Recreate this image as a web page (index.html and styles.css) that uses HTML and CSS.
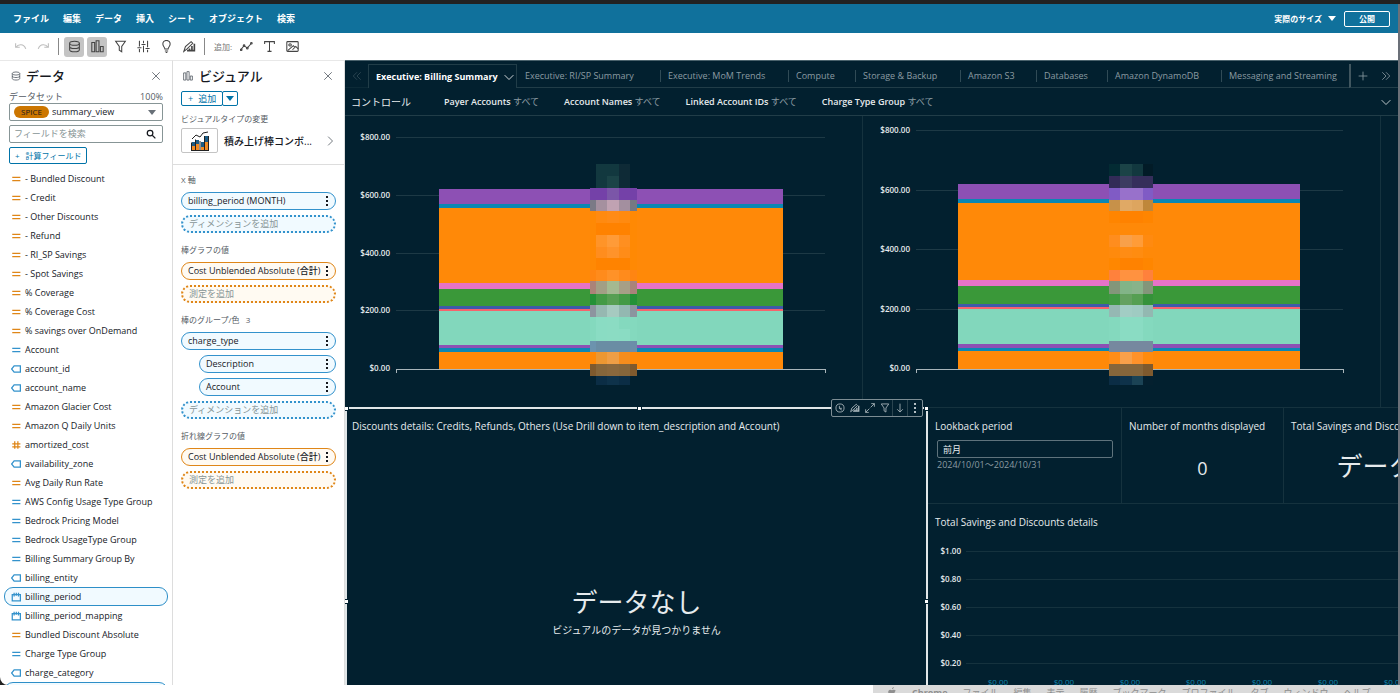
FILE: index.html
```
<!DOCTYPE html>
<html lang="ja">
<head>
    <meta charset="UTF-8">
    <meta name="viewport" content="width=device-width, initial-scale=1.0">
    <title>Billing Summary</title>
    <link rel="stylesheet" href="styles.css">
</head>
<body>
    <div class="shell">
        <div class="app">
            <header class="menubar">
                <nav class="menu">
                    <a href="#">ファイル</a>
                    <a href="#">編集</a>
                    <a href="#">データ</a>
                    <a href="#">挿入</a>
                    <a href="#">シート</a>
                    <a href="#">オブジェクト</a>
                    <a href="#">検索</a>
                </nav>
                <button class="zoom-button">実際のサイズ <span class="caret"></span></button>
                <button class="publish-button">公開</button>
            </header>

            <div class="toolbar">
                <button class="tool faded" aria-label="Undo"><svg class="icon" viewBox="0 0 16 16"><path d="M2 4v5h5M2.500 9C5 5 12 4 14.500 11"/></svg></button>
                <button class="tool faded" aria-label="Redo"><svg class="icon" viewBox="0 0 16 16"><path d="M14 4v5H9M13.500 9C11 5 4 4 1.500 11"/></svg></button>
                <span class="divider"></span>
                <button class="tool on" aria-label="Data"><svg class="icon" viewBox="0 0 16 16"><ellipse cx="8" cy="4" rx="6" ry="2.500"/><path d="M2 4v8c0 3.300 12 3.300 12 0V4M2 8c0 3.300 12 3.300 12 0"/></svg></button>
                <button class="tool on" aria-label="Visuals"><svg class="icon" viewBox="0 0 16 16"><path d="M1 3h3.500v11.500H1zM6.300 1h3.500v13.500H6.300zM11.600 8H15v6.500h-3.400z"/></svg></button>
                <button class="tool" aria-label="Filter"><svg class="icon" viewBox="0 0 16 16"><path d="M2 1.500h12L9.500 8v6.500l-3-2V8z"/></svg></button>
                <button class="tool" aria-label="Parameters"><svg class="icon" viewBox="0 0 16 16"><path d="M3 1v7M3 11v4M8 1v3M8 7v8M13 1v8M13 12v3M.5 9.500h5M5.500 5.500h5M10.500 10.500h5"/></svg></button>
                <button class="tool" aria-label="Insights"><svg class="icon" viewBox="0 0 16 16"><path d="M6 11C6 9 3.500 8 3.500 5a4.500 4.500 0 0 1 9 0c0 3-2.500 4-2.500 6zM6 13.500h4M7 15.500h2"/></svg></button>
                <button class="tool" aria-label="Edit visual"><svg class="icon" viewBox="0 0 16 16"><path d="M1 14l2-6 7-6 2 2-7 7z"/><path d="M8 10.500V14M11 7.500V14M14 4.500V14M5 13h10" stroke-width="2"/></svg></button>
                <span class="divider"></span>
                <span class="tool-label">追加:</span>
                <button class="tool" aria-label="Add line"><svg class="icon" viewBox="0 0 16 16"><path d="M1 12l4-5 4 3 5-6"/><circle cx="1.500" cy="12" r="1"/><circle cx="5" cy="7" r="1"/><circle cx="9" cy="10" r="1"/><circle cx="14" cy="4" r="1"/></svg></button>
                <button class="tool" aria-label="Add text"><svg class="icon" viewBox="0 0 16 16"><path d="M2 5V2h12v3M8 2v12M5.500 14h5"/></svg></button>
                <button class="tool" aria-label="Add image"><svg class="icon" viewBox="0 0 16 16"><rect x="1" y="2" width="14" height="12" rx="1"/><path d="M2 13l7-6 2 2M8 12l4-4 3 3"/><circle cx="5" cy="6" r="1.500"/></svg></button>
            </div>

            <div class="workspace">
                <aside class="panel data-panel">
                    <div class="panel-head">
                        <svg class="icon small" viewBox="0 0 16 16"><ellipse cx="8" cy="4" rx="6" ry="2.500"/><path d="M2 4v8c0 3.300 12 3.300 12 0V4M2 8c0 3.300 12 3.300 12 0"/></svg>
                        <h2>データ</h2>
                        <button class="close" aria-label="Close"><svg class="icon small" viewBox="0 0 16 16"><path d="M2 2l12 12M14 2L2 14"/></svg></button>
                    </div>
                    <div class="dataset-label"><label for="dataset">データセット</label><span>100%</span></div>
                    <div class="box">
                        <span class="badge">SPICE</span>
                        <select id="dataset"><option>summary_view</option></select>
                        <span class="caret"></span>
                    </div>
                    <div class="box search">
                        <input type="text" placeholder="フィールドを検索" aria-label="フィールドを検索">
                        <svg class="icon small dark" viewBox="0 0 16 16"><circle cx="6.500" cy="6.500" r="4.500"/><path d="M10 10l5 5"/></svg>
                    </div>
                    <button class="outline-button calc"><span>+</span>計算フィールド</button>
                    <ul class="fields" id="fields"></ul>
                </aside>

                <aside class="panel visual-panel">
                    <div class="panel-head">
                        <svg class="icon small" viewBox="0 0 16 16"><path d="M1 3h3.500v11.500H1zM6.300 1h3.500v13.500H6.300zM11.600 8H15v6.500h-3.400z"/></svg>
                        <h2>ビジュアル</h2>
                        <button class="close" aria-label="Close"><svg class="icon small" viewBox="0 0 16 16"><path d="M2 2l12 12M14 2L2 14"/></svg></button>
                    </div>
                    <div class="split">
                        <button class="outline-button"><span>+</span>追加</button>
                        <button class="outline-button" aria-label="More"><span class="caret"></span></button>
                    </div>
                    <p class="type-label">ビジュアルタイプの変更</p>
                    <button class="type-row">
                        <span class="thumb">
                            <svg viewBox="0 0 20 20" width="20" height="20">
                                <path d="M1 19.500h18" stroke="#222" fill="none"/>
                                <path fill="#f08a24" d="M2 15h3v4H2zM6 13h3v6H6zM11 16h3v3h-3zM15 11h3v8h-3z"/>
                                <path fill="#1c5c85" d="M2 11h3v4H2zM6 9h3v4H6zM11 11h3v5h-3zM15 5h3v6h-3z"/>
                                <path d="M1.500 11.500v7.500M5.500 8.500V19M10 10v9M14.500 5v14M18.500 5v14M2 8l4-4 4 2 3-4 5-1" stroke="#222" fill="none"/>
                            </svg>
                        </span>
                        <span class="type-name">積み上げ棒コンボ...</span>
                        <svg class="icon small" viewBox="0 0 16 16"><path d="M5 1l7 7-7 7"/></svg>
                    </button>
                    <div class="wells">
                        <section class="well">
                            <h3>X 軸</h3>
                            <button class="pill">billing_period (MONTH)<i class="dots"></i></button>
                            <button class="pill empty">ディメンションを追加</button>
                        </section>
                        <section class="well measure">
                            <h3>棒グラフの値</h3>
                            <button class="pill">Cost Unblended Absolute (合計)<i class="dots"></i></button>
                            <button class="pill empty">測定を追加</button>
                        </section>
                        <section class="well">
                            <h3>棒のグループ/色 &nbsp; 3</h3>
                            <button class="pill">charge_type<i class="dots"></i></button>
                            <button class="pill nested">Description<i class="dots"></i></button>
                            <button class="pill nested">Account<i class="dots"></i></button>
                            <button class="pill empty">ディメンションを追加</button>
                        </section>
                        <section class="well measure">
                            <h3>折れ線グラフの値</h3>
                            <button class="pill">Cost Unblended Absolute (合計)<i class="dots"></i></button>
                            <button class="pill empty">測定を追加</button>
                        </section>
                    </div>
                </aside>

                <main class="canvas">
                    <nav class="tabs">
                        <button class="tab-nav faded" aria-label="Previous sheets"><svg class="icon small" viewBox="0 0 16 16"><path d="M8 2L2 8l6 6M14 2L8 8l6 6"/></svg></button>
                        <button class="tab active">Executive: Billing Summary <svg class="icon small" viewBox="0 0 16 16"><path d="M1 5l7 7 7-7"/></svg></button>
                        <button class="tab">Executive: RI/SP Summary</button>
                        <button class="tab">Executive: MoM Trends</button>
                        <button class="tab">Compute</button>
                        <button class="tab">Storage &amp; Backup</button>
                        <button class="tab">Amazon S3</button>
                        <button class="tab">Databases</button>
                        <button class="tab">Amazon DynamoDB</button>
                        <button class="tab">Messaging and Streaming</button>
                        <button class="tab-nav add" aria-label="Add sheet"><svg class="icon small" viewBox="0 0 16 16"><path d="M8 1v14M1 8h14"/></svg></button>
                        <button class="tab-nav" aria-label="Next sheets"><svg class="icon small" viewBox="0 0 16 16"><path d="M2 2l6 6-6 6M8 2l6 6-6 6"/></svg></button>
                    </nav>
                    <div class="controls">
                        <span class="controls-title">コントロール</span>
                        <span class="control"><b>Payer Accounts</b> すべて</span>
                        <span class="control"><b>Account Names</b> すべて</span>
                        <span class="control"><b>Linked Account IDs</b> すべて</span>
                        <span class="control"><b>Charge Type Group</b> すべて</span>
                        <button class="expand" aria-label="Expand"><svg class="icon small" viewBox="0 0 16 16"><path d="M1 5l7 7 7-7"/></svg></button>
                    </div>

                    <div class="charts">
                        <div class="chart-cell"><svg class="chart" id="chartLeft" viewBox="0 0 517 291"></svg></div>
                        <div class="chart-cell"><svg class="chart" id="chartRight" viewBox="0 0 517 291"></svg></div>
                        <div></div>
                    </div>

                    <div class="lower">
                        <section class="visual active-visual">
                            <h4>Discounts details: Credits, Refunds, Others (Use Drill down to item_description and Account)</h4>
                            <div class="no-data">
                                <p class="no-data-title">データなし</p>
                                <p>ビジュアルのデータが見つかりません</p>
                            </div>
                            <i class="handle top-left"></i><i class="handle top"></i><i class="handle top-right"></i>
                            <i class="handle left"></i><i class="handle right"></i>
                            <div class="visual-tools">
                                <button aria-label="Anomaly"><svg class="icon small" viewBox="0 0 16 16"><circle cx="8" cy="8" r="6.500"/><path d="M7 4.500v4h4M7 8.500l4 3"/></svg></button>
                                <button aria-label="Format"><svg class="icon small" viewBox="0 0 16 16"><path d="M1 14l2-6 7-6 2 2-7 7z"/><path d="M8 10.500V14M11 7.500V14M14 4.500V14M5 13h10" stroke-width="2"/></svg></button>
                                <button aria-label="Maximize"><svg class="icon small" viewBox="0 0 16 16"><path d="M9 7l6-6M10 1h5v5M7 9l-6 6M1 10v5h5"/></svg></button>
                                <button aria-label="Filter"><svg class="icon small" viewBox="0 0 16 16"><path d="M2 1.500h12L9.500 8v6.500l-3-2V8z"/></svg></button>
                                <button class="ruled" aria-label="Drill down"><svg class="icon small" viewBox="0 0 16 16"><path d="M8 1v13M3.500 10L8 14.500l4.500-4.500"/></svg></button>
                                <button class="ruled" aria-label="Menu"><i class="dots"></i></button>
                            </div>
                        </section>
                        <div class="side">
                            <div class="kpis">
                                <section class="visual lookback">
                                    <label for="lookback">Lookback period</label>
                                    <input id="lookback" type="text" value="前月">
                                    <small>2024/10/01〜2024/10/31</small>
                                </section>
                                <section class="visual kpi">
                                    <h4>Number of months displayed</h4>
                                    <p class="number">0</p>
                                </section>
                                <section class="visual kpi">
                                    <h4>Total Savings and Discounts</h4>
                                    <p class="kpi-empty">データなし</p>
                                </section>
                            </div>
                            <section class="visual details">
                                <h4>Total Savings and Discounts details</h4>
                                <svg class="details-chart" id="chartDetails" width="540" height="160"></svg>
                            </section>
                        </div>
                    </div>
                </main>
            </div>
        </div>
    </div>

    <footer class="os-strip">
        <div class="os-menu">
            <svg viewBox="0 0 16 16" width="10" height="10"><path fill="#8f8f8f" d="M11 0c0 2-1.500 3.500-3 3.500C8 1.500 9.500.5 11 0zM8 5c1-.5 4-1.500 6 1-3 2-2 5 .5 6-2 4-3.500 4-6 3-2.500 1-4 0-5.500-3C1 8 2 5 5 4.500 6 4.500 7 5 8 5z"/></svg>
            <b>Chrome</b><span>ファイル</span><span>編集</span><span>表示</span><span>履歴</span><span>ブックマーク</span><span>プロファイル</span><span>タブ</span><span>ウィンドウ</span><span>ヘルプ</span>
        </div>
    </footer>

    <script src="script.js"></script>
</body>
</html>
```
FILE: styles.css
```
/* Basic reset and global styles */
* {
    margin: 0;
    padding: 0;
    box-sizing: border-box;
}
body {
    font-family: 'Open Sans', 'Noto Sans CJK JP', sans-serif;
    font-size: 9px;
    line-height: 12px;
    color: #16191f;
    background-color: #ffffff;
    display: flex;
    flex-direction: column;
    height: 100vh;
    overflow: hidden;
}
button, input, select {
    font: inherit;
    color: inherit;
    background: none;
    border: none;
    outline: none;
}
button {
    cursor: pointer;
}
a {
    color: inherit;
    text-decoration: none;
}
.shell {
    flex: 1;
    min-height: 0;
    padding-top: 4px;
    background-color: #222222;
}
.app {
    height: 100%;
    display: flex;
    flex-direction: column;
    background-color: #ffffff;
    border-right: 2px solid #6b7078;
    border-bottom-left-radius: 8px;
    overflow: hidden;
}
.icon {
    width: 13px;
    height: 13px;
    fill: none;
    stroke: currentColor;
    stroke-width: 1.3;
    flex-shrink: 0;
}
.icon.small {
    width: 10px;
    height: 10px;
}
.icon.dark {
    color: #16191f;
    stroke-width: 2;
}
.caret {
    display: inline-block;
    border: 4px solid transparent;
    border-top: 5px solid currentColor;
    border-bottom: none;
}
.dots {
    width: 2px;
    height: 2px;
    background-color: currentColor;
    box-shadow: 0 -4px currentColor, 0 4px currentColor;
}

/* Menu bar */
.menubar {
    height: 29px;
    flex-shrink: 0;
    display: flex;
    align-items: center;
    padding: 0 8px 0 13px;
    background-color: #10719c;
    color: #ffffff;
    font-weight: 700;
}
.menu {
    display: flex;
    gap: 14px;
    margin-right: auto;
}
.zoom-button {
    display: flex;
    align-items: center;
    gap: 6px;
    margin-right: 8px;
    font-size: 8px;
    font-weight: 700;
}
.publish-button {
    width: 46px;
    height: 16px;
    border: 1px solid #ffffff;
    border-radius: 2px;
    font-size: 8px;
    font-weight: 700;
    line-height: 12px;
}

/* Toolbar */
.toolbar {
    height: 27px;
    flex-shrink: 0;
    display: flex;
    align-items: center;
    gap: 3px;
    padding: 0 10px;
    color: #444444;
}
.tool {
    width: 20px;
    height: 20px;
    display: flex;
    align-items: center;
    justify-content: center;
    border-radius: 3px;
}
.tool.on {
    background-color: #c4c4c4;
}
.faded {
    opacity: 0.35;
}
.divider {
    width: 1px;
    height: 17px;
    margin: 0 2px;
    background-color: #888888;
}
.tool-label {
    padding: 0 1px 0 4px;
    color: #777777;
    font-size: 8px;
}

/* Side panels */
.workspace {
    flex: 1;
    min-height: 0;
    display: flex;
}
.panel {
    width: 173px;
    flex-shrink: 0;
    border-top: 1px solid #e8e8e8;
    border-right: 1px solid #dddddd;
    color: #545b64;
    overflow: hidden;
}
.data-panel {
    padding: 0 4px;
}
.panel-head {
    display: flex;
    align-items: center;
    gap: 5px;
    height: 30px;
    padding: 0 7px;
}
.panel-head h2 {
    font-size: 13px;
    font-weight: 500;
    line-height: 18px;
    color: #16191f;
    margin-right: auto;
}
.close {
    display: flex;
}
.dataset-label {
    display: flex;
    justify-content: space-between;
    padding: 0 5px;
}
.box {
    display: flex;
    align-items: center;
    gap: 3px;
    height: 18px;
    margin: 0 5px 4px;
    padding: 0 6px 0 4px;
    border: 1px solid #879596;
    border-radius: 2px;
}
.box .caret {
    color: #687078;
}
.box select,
.box input {
    flex: 1;
    min-width: 0;
}
.box select {
    appearance: none;
    font-weight: 500;
    color: #16191f;
}
.box input::placeholder {
    color: #879596;
}
.badge {
    padding: 0 7px;
    border-radius: 6px;
    background-color: #cc7600;
    color: #16191f;
    font-size: 8px;
    font-weight: 500;
}
.outline-button {
    display: flex;
    align-items: center;
    gap: 5px;
    height: 16px;
    padding: 0 6px;
    border: 1px solid #0073a8;
    border-radius: 2px;
    color: #0073a8;
    line-height: 12px;
}
.calc {
    gap: 6px;
    height: 17px;
    margin: 0 5px 5px;
    padding: 0 5px;
    font-size: 8px;
}
.fields {
    list-style: none;
    color: #16191f;
    font-weight: 500;
}
.fields li {
    display: flex;
    align-items: center;
    gap: 4px;
    height: 19px;
    padding: 0 6px;
    border: 1px solid transparent;
    border-radius: 9px;
    white-space: nowrap;
}
.fields li.selected {
    border-color: #2e8fc8;
    background-color: #f1faff;
}
.orange {
    color: #df8618;
}
.blue {
    color: #3392cc;
}
.visual-panel {
    width: 172px;
}
.visual-panel .panel-head {
    gap: 6px;
    padding: 0 11px 0 10px;
}
.split {
    display: flex;
    padding: 0 8px;
}
.split .outline-button + .outline-button {
    margin-left: -1px;
    padding: 0 3px;
}
.split .outline-button {
    height: 15px;
}
.type-label {
    padding: 7px 8px 3px;
    font-size: 8px;
}
.type-row {
    display: flex;
    align-items: center;
    width: 100%;
    height: 37px;
    padding: 0 9px 11px 8px;
    border-bottom: 1px solid #dddddd;
}
.thumb {
    display: flex;
    justify-content: center;
    width: 37px;
    height: 25px;
    padding-top: 2px;
    border: 1px solid #c4c4c4;
    border-radius: 2px;
}
.type-name {
    margin: 0 auto 0 6px;
    color: #16191f;
    font-size: 10px;
    font-weight: 500;
}
.wells {
    display: flex;
    flex-direction: column;
    gap: 11px;
    padding: 9px 8px;
}
.well {
    display: flex;
    flex-direction: column;
    align-items: stretch;
    gap: 5px;
    --line: #3392cc;
    --fill: #f1faff;
}
.well.measure {
    --line: #df8618;
    --fill: #fffaf2;
}
.well h3 {
    margin-bottom: 1px;
    font-size: 8px;
    font-weight: 400;
}
.pill {
    display: flex;
    align-items: center;
    justify-content: space-between;
    height: 18px;
    padding: 0 7px 0 6px;
    border: 1px solid var(--line);
    border-radius: 9px;
    background-color: var(--fill);
    color: #16191f;
    font-weight: 500;
    white-space: nowrap;
}
.pill.nested {
    margin-left: 18px;
}
.pill.empty {
    border: 2px dotted var(--line);
    color: #879596;
    font-weight: 400;
}

/* Dashboard */
.canvas {
    flex: 1;
    min-width: 0;
    display: flex;
    flex-direction: column;
    background-color: #02202f;
    border-top: 1px solid #4a626c;
    color: #e6ebed;
    overflow: hidden;
}
.tabs {
    display: grid;
    grid-template-columns: 23px 149fr 143fr 128fr 67fr 105fr 76fr 71fr 114fr 128fr 25px 24px;
    height: 27px;
    flex-shrink: 0;
    padding-top: 3px;
}
.tab,
.tab-nav {
    display: flex;
    align-items: center;
    border-bottom: 1px solid #213d48;
    color: #8b9ba2;
    font-weight: 500;
    white-space: nowrap;
}
.tab::before {
    content: '';
    width: 1px;
    height: 12px;
    margin-right: 7px;
    background-color: #304b56;
}
.tab.active {
    justify-content: space-between;
    padding: 0 2px 0 7px;
    border: 1px solid #213d48;
    border-bottom: none;
    color: #ffffff;
    font-weight: 700;
}
.tab.active::before,
.tab.active + .tab::before {
    background: none;
}
.tab.active::before {
    display: none;
}
.tab-nav {
    justify-content: center;
}
.tab-nav.add {
    border-left: 2px solid #40565f;
}
.controls {
    display: flex;
    align-items: center;
    height: 28px;
    flex-shrink: 0;
    padding: 0 7px 0 6px;
    border-bottom: 1px solid #213d48;
}
.controls-title {
    margin-right: 33px;
    font-size: 10px;
}
.control {
    margin-right: 25px;
    color: #8b9ba2;
    font-size: 9px;
    white-space: nowrap;
}
.control b {
    color: #e6ebed;
    font-weight: 600;
}
.expand {
    display: flex;
    margin-left: auto;
}
.charts {
    display: grid;
    grid-template-columns: 518fr 518fr 17fr;
    flex-shrink: 0;
}
.chart-cell {
    border-right: 1px solid #15323e;
}
.chart {
    display: block;
    width: 100%;
    shape-rendering: crispEdges;
}
.chart text,
.details-chart text {
    fill: #e6ebed;
    font-size: 8px;
    font-weight: 600;
}
.details-chart .value {
    fill: #0d86ad;
    font-weight: 400;
}
.lower {
    flex: 1;
    min-height: 0;
    display: grid;
    grid-template-columns: 583fr 470fr;
}
.visual h4,
.lookback label {
    font-size: 10px;
    font-weight: 500;
    line-height: 14px;
    white-space: nowrap;
}
.active-visual {
    position: relative;
    display: flex;
    flex-direction: column;
    padding: 10px 5px;
    border: 2px solid #e0e6e8;
    border-bottom: none;
}
.no-data {
    flex: 1;
    display: flex;
    flex-direction: column;
    align-items: center;
    justify-content: center;
    gap: 5px;
    padding-top: 112px;
    font-size: 10px;
}
.no-data-title {
    font-size: 26px;
    line-height: 34px;
}
.handle {
    position: absolute;
    width: 5px;
    height: 5px;
    border: 1px solid #02202f;
    background-color: #ffffff;
}
.top-left { top: -3px; left: -3px; }
.top { top: -3px; left: 50%; }
.top-right { top: -3px; right: -3px; }
.left { top: 69%; left: -3px; }
.right { top: 69%; right: -3px; }
.visual-tools {
    position: absolute;
    top: -10px;
    right: 3px;
    display: flex;
    height: 18px;
    border: 1px solid #7d8d94;
    border-radius: 2px;
    background-color: #02202f;
    color: #b4bfc4;
}
.visual-tools button {
    display: flex;
    align-items: center;
    justify-content: center;
    width: 15px;
}
.visual-tools .ruled {
    border-left: 1px solid #2b4550;
}
.side {
    min-width: 0;
    display: flex;
    flex-direction: column;
    overflow: hidden;
}
.kpis {
    display: grid;
    grid-template-columns: 194px 162px 236px;
    height: 97px;
    flex-shrink: 0;
    border-top: 1px solid #15323e;
    border-bottom: 1px solid #15323e;
}
.kpis .visual {
    padding: 11px 7px;
    border-right: 1px solid #15323e;
}
.lookback label {
    display: block;
    font-weight: 400;
}
.lookback input {
    display: block;
    width: 176px;
    height: 18px;
    margin: 7px 0 1px 2px;
    padding: 0 5px;
    border: 1px solid #5f737c;
    border-radius: 2px;
}
.lookback small {
    display: block;
    margin-left: 2px;
    color: #8b9ba2;
    font-size: 9px;
}
.kpi p {
    text-align: center;
    white-space: nowrap;
}
.number {
    margin-top: 23px;
    font-size: 18px;
    line-height: 24px;
}
.kpi-empty {
    margin-top: 16px;
    font-size: 26px;
    line-height: 34px;
}
.details {
    padding: 11px 7px 0;
}
.details-chart {
    display: block;
}

/* Strip under the window */
.os-strip {
    height: 8px;
    flex-shrink: 0;
    display: flex;
    justify-content: flex-end;
    overflow: hidden;
}
.os-menu {
    display: flex;
    gap: 15px;
    width: 527px;
    height: 20px;
    padding: 2px 14px;
    background-color: #dadada;
    color: #8f8f8f;
    white-space: nowrap;
}
```
FILE: script.js
```
const svgNs = 'http://www.w3.org/2000/svg';

const fieldIcons = {
    calcMeasure: ['orange', 'M2 5.500h13M2 10.500h13'],
    calcDim: ['blue', 'M2 5.500h13M2 10.500h13'],
    number: ['orange', 'M6 2v12M11 2v12M2 6h13M2 11h13'],
    text: ['blue', 'M5 3h10v10H5L1 8z'],
    date: ['blue', 'M2 4h13v10H2zM5 1v6M8.500 1v5M12 1v6']
};

const fields = [
    ['calcMeasure', '- Bundled Discount'],
    ['calcMeasure', '- Credit'],
    ['calcMeasure', '- Other Discounts'],
    ['calcMeasure', '- Refund'],
    ['calcMeasure', '- RI_SP Savings'],
    ['calcMeasure', '- Spot Savings'],
    ['calcMeasure', '% Coverage'],
    ['calcMeasure', '% Coverage Cost'],
    ['calcMeasure', '% savings over OnDemand'],
    ['calcDim', 'Account'],
    ['text', 'account_id'],
    ['text', 'account_name'],
    ['calcMeasure', 'Amazon Glacier Cost'],
    ['calcMeasure', 'Amazon Q Daily Units'],
    ['number', 'amortized_cost'],
    ['text', 'availability_zone'],
    ['calcMeasure', 'Avg Daily Run Rate'],
    ['calcDim', 'AWS Config Usage Type Group'],
    ['calcDim', 'Bedrock Pricing Model'],
    ['calcDim', 'Bedrock UsageType Group'],
    ['calcDim', 'Billing Summary Group By'],
    ['text', 'billing_entity'],
    ['date', 'billing_period', true],
    ['date', 'billing_period_mapping'],
    ['calcMeasure', 'Bundled Discount Absolute'],
    ['calcDim', 'Charge Type Group'],
    ['text', 'charge_category'],
    ['', '', true]
];

const fieldList = document.getElementById('fields');
fields.forEach(([type, name, selected]) => {
    const item = document.createElement('li');
    if (selected) item.classList.add('selected');
    if (type) {
        const [color, path] = fieldIcons[type];
        item.innerHTML = `<svg class="icon small ${color}" viewBox="0 0 16 16"><path stroke-width="2" d="${path}"/></svg>${name}`;
    }
    fieldList.appendChild(item);
});

function add(svg, tag, attrs, text) {
    const el = document.createElementNS(svgNs, tag);
    for (const key in attrs) el.setAttribute(key, attrs[key]);
    if (text) el.textContent = text;
    svg.appendChild(el);
}

// Layer colours from the top of the stack down
const layerColors = ['#8d50b4', '#0b87b4', '#ff8908', '#e673c8', '#3a9839', '#3e5ba9', '#f7636c', '#82d7bc', '#8d50b4', '#0b87b4', '#ff8908'];

function drawStack(id, chart) {
    const svg = document.getElementById(id);
    chart.ticks.forEach((y, i) => {
        add(svg, 'path', { d: `M${chart.axis[0]} ${y}.5H${chart.axis[1]}`, stroke: '#1d3945' });
        add(svg, 'text', { x: chart.axis[0] - 6, y: y + 3, 'text-anchor': 'end' }, `$${800 - i * 200}.00`);
    });
    add(svg, 'text', { x: chart.axis[0] - 6, y: 255, 'text-anchor': 'end' }, '$0.00');
    layerColors.forEach((color, i) => {
        const y = chart.tops[i];
        add(svg, 'rect', { x: chart.bar[0], y, width: chart.bar[1] - chart.bar[0], height: chart.tops[i + 1] - y, fill: color });
    });
    add(svg, 'path', { d: `M${chart.axis[0]}.5 257v-3.500H${chart.axis[1]}.5v3.500`, stroke: '#a9b5ba', fill: 'none' });
    // Masked label blocks
    chart.mask.forEach((row, r) => {
        row.forEach((color, c) => {
            if (!color) return;
            const x = chart.maskCols[c];
            add(svg, 'rect', { x, y: maskRows[r], width: chart.maskCols[c + 1] - x, height: maskRows[r + 1] - maskRows[r], fill: color });
        });
    });
}

const maskRows = [48, 60, 72, 84, 95, 107, 119, 131, 142, 154, 165, 178, 189, 201, 213, 225, 236, 248, 260, 269];

drawStack('chartLeft', {
    axis: [51, 480],
    bar: [94, 438],
    ticks: [21, 79, 137, 194],
    tops: [73, 88, 92, 167, 173, 190, 193, 195, 229, 232, 236, 253],
    maskCols: [245, 251, 262, 274, 285, 292],
    mask: [
        ['', '#12383f', '#12383f', '#0e2a36', ''],
        ['', '#12383f', '#1b4347', '#0e2a36', ''],
        ['#7441a8', '#7441a8', '#7b56a8', '#7441a8', '#7441a8'],
        ['#7b7a86', '#a5909f', '#c0a2b2', '#a38f9f', '#767983'],
        ['#ff8904', '#ff8a10', '#ff8b16', '#ff8a10', '#ff8904'],
        ['#ff8904', '#ff8200', '#ff8200', '#ff8200', '#ff8904'],
        ['#ff8904', '#ff9428', '#ff9b38', '#ff8f20', '#ff8904'],
        ['#ff8904', '#ff8d1e', '#ff932a', '#ff8c18', '#ff8904'],
        ['#ff8904', '#ff8300', '#ff8300', '#ff8300', '#ff8904'],
        ['#ff8512', '#ff8b1c', '#ff9228', '#ff8b1c', '#ff8512'],
        ['#ab8378', '#a29f85', '#a4b991', '#a69f86', '#a9837a'],
        ['#249137', '#439a45', '#579f53', '#439a45', '#249137'],
        ['#8d949f', '#96b8b1', '#a6cac0', '#93b8b1', '#8b959f'],
        ['#84d9be', '#8adcc3', '#8bdcc3', '#84d9be', '#84d9be'],
        ['#84d9be', '#8adcc3', '#8bdcc3', '#8adcc3', '#84d9be'],
        ['#6c93ae', '#6a8da4', '#6a8da4', '#6a8da4', '#6c8da9'],
        ['#ff8908', '#ec9732', '#ef9e45', '#f68d1d', '#ff8908'],
        ['#7f5a2e', '#86663b', '#8a683d', '#86663b', '#7f5a2e'],
        ['', '#0b2d45', '#0e324a', '#0b2d45', '']
    ]
});

drawStack('chartRight', {
    axis: [53, 480],
    bar: [95, 437],
    ticks: [14, 74, 133, 193],
    tops: [68, 83, 87, 164, 170, 188, 191, 193, 228, 232, 235, 253],
    maskCols: [246, 257, 269, 280, 290],
    mask: [
        ['#032b33', '#1b4347', '#12383f', '#021b27'],
        ['#322b57', '#3c3c62', '#352e5b', '#352e5b'],
        ['#805bc5', '#9871cb', '#9871cb', '#805bc5'],
        ['#c79149', '#e0a965', '#dda55f', '#bf873a'],
        ['#ff8500', '#ff8200', '#ff8200', '#ff8500'],
        ['#ff8908', '#ff8908', '#ff8908', '#ff8908'],
        ['#ff8d1e', '#f8a04a', '#ff9c38', '#ff8a10'],
        ['#ff8a0c', '#ff8c14', '#ff8c10', '#ff8908'],
        ['#ff8700', '#ff8200', '#ff8200', '#ff8600'],
        ['#ff813c', '#ff9240', '#ff9240', '#ff813c'],
        ['#83967a', '#82b487', '#88b38a', '#83967a'],
        ['#3f9942', '#64a160', '#559f52', '#35923a'],
        ['#95b8b3', '#a2cdc4', '#9fcbc2', '#93b8b1'],
        ['#84d9be', '#8adcc3', '#8adcc3', '#84d9be'],
        ['#84d9be', '#8adcc3', '#8adcc3', '#84d9be'],
        ['#76889f', '#76889f', '#76889f', '#76889f'],
        ['#ff8d16', '#f8a04a', '#ff922a', '#ff8b0e'],
        ['#86663b', '#86663b', '#86663b', '#7f5a2e'],
        ['#0b2d45', '#0e324a', '#1b4355', '#04202f']
    ]
});

const details = document.getElementById('chartDetails');
['$1.00', '$0.80', '$0.60', '$0.40', '$0.20'].forEach((label, i) => {
    const y = 22 + i * 28;
    add(details, 'path', { d: `M31 ${y}.5H540`, stroke: '#15323e' });
    add(details, 'text', { x: 26, y: y + 3, 'text-anchor': 'end' }, label);
});
for (let i = 0; i < 7; i++) {
    add(details, 'text', { class: 'value', x: 63 + i * 66, y: 156, 'text-anchor': 'middle' }, '$0.00');
}
```
